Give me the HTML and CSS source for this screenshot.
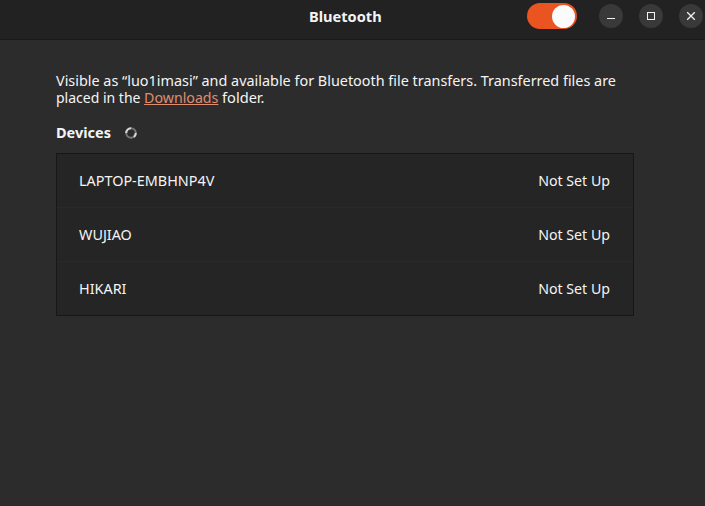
FILE: index.html
```html
<!DOCTYPE html>
<html lang="en">
<head>
  <meta charset="UTF-8" />
  <meta name="viewport" content="width=device-width, initial-scale=1" />
  <title>Bluetooth</title>
  <link rel="stylesheet" href="styles.css">
</head>
<body>

  <header class="titlebar">
    <h1 class="title">Bluetooth</h1>
    <div class="switch"><span class="knob"></span></div>
    <div class="window-buttons">
      <button class="win-btn" aria-label="Minimize">
        <svg width="12" height="12" viewBox="0 0 12 12"><path d="M2 8.5h8" stroke="#f2f2f2" stroke-width="1" fill="none"/></svg>
      </button>
      <button class="win-btn" aria-label="Maximize">
        <svg width="12" height="12" viewBox="0 0 12 12"><rect x="2.5" y="2.5" width="7" height="7" stroke="#f2f2f2" stroke-width="1" fill="none"/></svg>
      </button>
      <button class="win-btn" aria-label="Close">
        <svg width="12" height="12" viewBox="0 0 12 12"><path d="M2.2 2.2l7.6 7.6M9.8 2.2l-7.6 7.6" stroke="#f2f2f2" stroke-width="1.3" fill="none"/></svg>
      </button>
    </div>
  </header>

  <main class="content">
    <div class="intro">
      <p class="intro-line">Visible as “luo1imasi” and available for Bluetooth file transfers. Transferred files are</p>
      <p class="intro-line second"><span>placed in the</span> <a class="link" href="#">Downloads</a> <span class="folder">folder.</span></p>
    </div>

    <div class="section-head">
      <h2 class="section-title">Devices</h2>
      <svg class="spinner" width="12" height="12" viewBox="0 0 12 12">
        <circle cx="6" cy="6" r="4.8" stroke="#777777" stroke-width="2" fill="none"/>
        <path d="M1.2 6a4.8 4.8 0 0 1 4.8-4.8M10.8 6a4.8 4.8 0 0 1-2 3.9" stroke="#d8d8d8" stroke-width="2" fill="none"/>
      </svg>
    </div>

    <div class="device-list">
      <div class="device"><span class="device-name">LAPTOP-EMBHNP4V</span><span class="device-state">Not Set Up</span></div>
      <div class="device"><span class="device-name">WUJIAO</span><span class="device-state">Not Set Up</span></div>
      <div class="device"><span class="device-name">HIKARI</span><span class="device-state">Not Set Up</span></div>
    </div>
  </main>

</body>
</html>
```

FILE: styles.css
```css
* {
  box-sizing: border-box;
  margin: 0;
  padding: 0;
}

html, body {
  height: 100%;
}

body {
  background-color: #2c2c2c;
  color: #f4f4f4;
  font-family: 'Noto Sans', sans-serif;
  font-size: 14px;
  overflow: hidden;
}

/* Top bar */
.titlebar {
  display: flex;
  align-items: flex-start;
  height: 40px;
  padding: 3px 2px 0 309px;
  background-color: #222222;
  border-bottom: 1px solid #1a1a1a;
}

.title {
  font-size: 14.6px;
  font-weight: 700;
  line-height: 26px;
}

.switch {
  display: flex;
  justify-content: flex-end;
  align-items: center;
  width: 50px;
  height: 26px;
  margin-left: auto;
  padding-right: 2px;
  background-color: #e95420;
  border-radius: 13px;
}

.knob {
  width: 23px;
  height: 23px;
  background-color: #fbfbfb;
  border-radius: 50%;
}

.window-buttons {
  display: flex;
  gap: 16px;
  margin-left: 22px;
  margin-top: 1px;
}

.win-btn {
  display: flex;
  align-items: center;
  justify-content: center;
  width: 24px;
  height: 24px;
  background-color: #393939;
  border: none;
  border-radius: 50%;
}

/* Main */
.content {
  width: 578px;
  margin-left: 56px;
  padding-top: 32px;
}

.intro-line {
  font-size: 14.4px;
  line-height: 17px;
  white-space: nowrap;
}

.intro-line.second {
  font-size: 14px;
}

.link {
  color: #e08c70;
  font-size: 14.2px;
}

.folder {
  font-size: 14.6px;
}

.section-head {
  display: flex;
  align-items: center;
  gap: 14px;
  height: 18px;
  margin-top: 17px;
}

.spinner {
  margin-top: 1px;
}

.section-title {
  font-size: 14.5px;
  font-weight: 700;
  line-height: 18px;
}

.device-list {
  margin-top: 12px;
  background-color: #252525;
  border: 1px solid #171717;
}

.device {
  display: flex;
  justify-content: space-between;
  align-items: center;
  height: 54px;
  padding: 0 23px 0 22px;
  line-height: 20px;
  border-bottom: 1px solid #2a2a2a;
}

.device:last-child {
  height: 53px;
  border-bottom: none;
}

.device-name {
  font-size: 14.4px;
}

.device-state {
  font-size: 14.2px;
}
```
